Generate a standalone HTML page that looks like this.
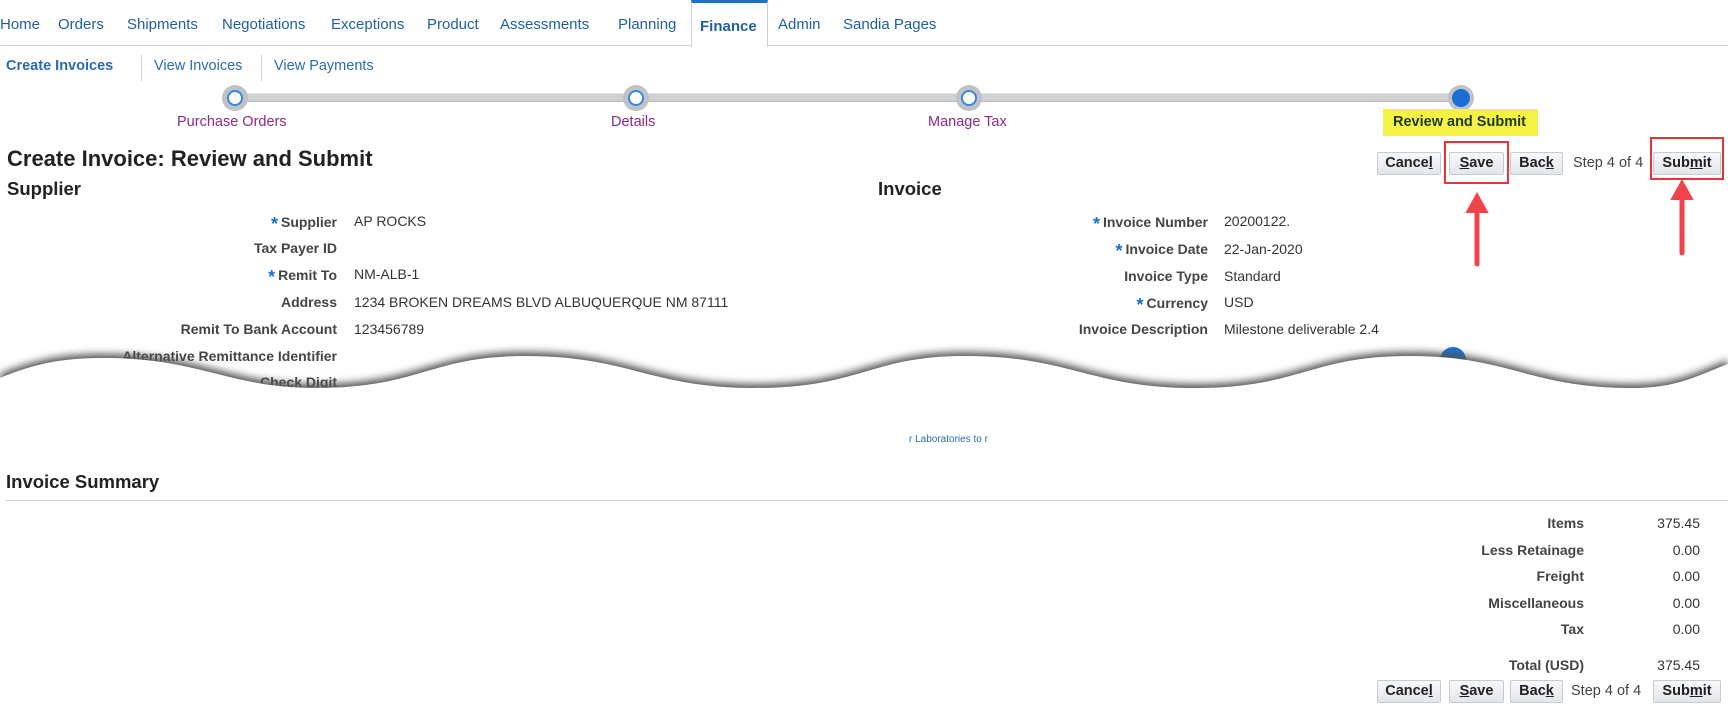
<!DOCTYPE html>
<html><head><meta charset="utf-8"><style>
*{margin:0;padding:0;box-sizing:border-box}
body{width:1728px;height:708px;background:#fff;font-family:"Liberation Sans",sans-serif;font-size:14px;color:#333;position:relative;overflow:hidden}
.a{position:absolute;white-space:nowrap}
.nav{color:#1f5f9f;font-size:15px;top:16px}
.sub{color:#2a6bb0;font-size:14.5px;top:58px}
.lbl{font-weight:bold;color:#444;text-align:right;width:340px}
.val{color:#333}
.star{color:#1a6fd0;font-size:18px;font-weight:bold;position:relative;top:3px;margin-right:3px}
.btn{position:absolute;height:23px;border:1px solid #c8ccd2;background:linear-gradient(#f7f8fa,#e3e6ea);border-radius:2px;font-weight:bold;color:#222;font-size:14.5px;text-align:center;line-height:21px}
.red{position:absolute;border:2px solid #e8333b}
.circ{position:absolute;width:26px;height:26px;border-radius:50%;background:#bfc2c6;top:85px}
.circ i{position:absolute;left:5px;top:5px;width:16px;height:16px;border-radius:50%;background:#fff;border:2px solid #3b87d8}
.step{color:#8a2a8a;font-size:14.5px;top:114px}
.h2{font-weight:bold;color:#222;font-size:18.5px}
.srow{font-weight:bold;color:#444;text-align:right;width:200px}
.snum{text-align:right;width:80px;color:#333}
</style></head><body>
<div class="a nav" style="left:0">Home</div>
<div class="a nav" style="left:58px">Orders</div>
<div class="a nav" style="left:127px">Shipments</div>
<div class="a nav" style="left:222px">Negotiations</div>
<div class="a nav" style="left:331px">Exceptions</div>
<div class="a nav" style="left:427px">Product</div>
<div class="a nav" style="left:500px">Assessments</div>
<div class="a nav" style="left:618px">Planning</div>
<div class="a" style="left:691px;top:0;width:77px;height:47px;border:1px solid #c8d0d8;border-top:3px solid #1a6fd0;border-bottom:none;background:#fff;z-index:2"></div>
<div class="a nav" style="left:700px;top:18px;font-weight:bold;z-index:3">Finance</div>
<div class="a nav" style="left:778px">Admin</div>
<div class="a nav" style="left:843px">Sandia Pages</div>
<div class="a" style="left:0;top:45px;width:1728px;height:1px;background:#c8d0d8"></div>

<div class="a sub" style="left:6px;font-weight:bold">Create Invoices</div>
<div class="a" style="left:141px;top:55px;width:1px;height:26px;background:#c8d0d8"></div>
<div class="a sub" style="left:154px">View Invoices</div>
<div class="a" style="left:261px;top:55px;width:1px;height:26px;background:#c8d0d8"></div>
<div class="a sub" style="left:274px">View Payments</div>

<div class="a" style="left:240px;top:93px;width:1222px;height:9px;background:#cfd1d3;border-top:1px solid #e2e3e4;border-bottom:1px solid #b8babc"></div>
<div class="circ" style="left:222px"><i></i></div>
<div class="circ" style="left:623px"><i></i></div>
<div class="circ" style="left:956px"><i></i></div>
<div class="circ" style="left:1448px"><i style="background:#1a6fd0;border-color:#1a6fd0;left:4px;top:4px;width:18px;height:18px"></i></div>
<div class="a step" style="left:177px">Purchase Orders</div>
<div class="a step" style="left:611px">Details</div>
<div class="a step" style="left:928px">Manage Tax</div>
<div class="a" style="left:1383px;top:109px;width:155px;height:27px;background:#f5f246"></div>
<div class="a" style="left:1393px;top:114px;font-weight:bold;color:#1d3a1d;font-size:14.5px">Review and Submit</div>

<div class="a" style="left:7px;top:146px;font-size:22px;font-weight:bold;color:#222">Create Invoice: Review and Submit</div>
<div class="btn" style="left:1377px;top:152px;width:64px">Cance<u>l</u></div>
<div class="btn" style="left:1449px;top:152px;width:55px"><u>S</u>ave</div>
<div class="btn" style="left:1510px;top:152px;width:53px">Bac<u>k</u></div>
<div class="a" style="left:1573px;top:155px;font-size:14.5px;color:#444">Step 4 of 4</div>
<div class="btn" style="left:1653px;top:152px;width:68px">Sub<u>m</u>it</div>
<div class="red" style="left:1444px;top:141px;width:65px;height:43px"></div>
<div class="red" style="left:1650px;top:137px;width:74px;height:43px"></div>
<svg class="a" style="left:0;top:0" width="1728" height="708">
<g fill="#f0444a" stroke="#f0444a" stroke-width="5" stroke-linecap="round">
<line x1="1477" y1="264" x2="1477" y2="205"/><polygon points="1467,212 1477,194 1487,212" stroke-width="2"/>
<line x1="1682" y1="253" x2="1682" y2="192"/><polygon points="1672,199 1682,181 1692,199" stroke-width="2"/>
</g></svg>

<div class="a h2" style="left:7px;top:178px">Supplier</div>
<div class="a h2" style="left:878px;top:178px">Invoice</div>

<div class="a lbl" style="left:-3px;top:211px"><span class="star">*</span>Supplier</div><div class="a val" style="left:354px;top:213px">AP ROCKS</div>
<div class="a lbl" style="left:-3px;top:240px">Tax Payer ID</div>
<div class="a lbl" style="left:-3px;top:264px"><span class="star">*</span>Remit To</div><div class="a val" style="left:354px;top:266px">NM-ALB-1</div>
<div class="a lbl" style="left:-3px;top:294px">Address</div><div class="a val" style="left:354px;top:294px">1234 BROKEN DREAMS BLVD ALBUQUERQUE NM 87111</div>
<div class="a lbl" style="left:-3px;top:321px">Remit To Bank Account</div><div class="a val" style="left:354px;top:321px">123456789</div>
<div class="a lbl" style="left:-3px;top:348px">Alternative Remittance Identifier</div>
<div class="a lbl" style="left:-3px;top:374px">Check Digit</div>

<div class="a lbl" style="left:868px;top:211px"><span class="star">*</span>Invoice Number</div><div class="a val" style="left:1224px;top:213px">20200122.</div>
<div class="a lbl" style="left:868px;top:238px"><span class="star">*</span>Invoice Date</div><div class="a val" style="left:1224px;top:241px">22-Jan-2020</div>
<div class="a lbl" style="left:868px;top:268px">Invoice Type</div><div class="a val" style="left:1224px;top:268px">Standard</div>
<div class="a lbl" style="left:868px;top:292px"><span class="star">*</span>Currency</div><div class="a val" style="left:1224px;top:294px">USD</div>
<div class="a lbl" style="left:868px;top:321px">Invoice Description</div><div class="a val" style="left:1224px;top:321px">Milestone deliverable 2.4</div>
<div class="a" style="left:1440px;top:347px;width:26px;height:26px;border-radius:50%;background:#1a6fd0"></div>

<svg class="a" style="left:0;top:0" width="1728" height="708">
<defs><filter id="b" x="-5%" y="-50%" width="110%" height="200%"><feGaussianBlur stdDeviation="4"/></filter></defs>
<path d="M0,372 C40,355 70,352 105,352 C200,352 230,382 315,382 C420,382 430,350 525,350 C630,350 650,382 755,382 C860,382 870,350 965,350 C1070,350 1090,382 1195,382 C1300,382 1310,350 1410,350 C1510,350 1530,382 1632,382 C1680,382 1700,368 1728,358 L1728,395 L0,395 Z" fill="#555" filter="url(#b)" transform="translate(0,2)"/>
<path d="M0,378 C40,361 70,358 105,358 C200,358 230,388 315,388 C420,388 430,356 525,356 C630,356 650,388 755,388 C860,388 870,356 965,356 C1070,356 1090,388 1195,388 C1300,388 1310,356 1410,356 C1510,356 1530,388 1632,388 C1680,388 1700,374 1728,364 L1728,708 L0,708 Z" fill="#fff"/>
</svg>
<div class="a" style="left:909px;top:434px;font-size:10px;color:#2a6bb0">r Laboratories to r</div>

<div class="a h2" style="left:6px;top:471px">Invoice Summary</div>
<div class="a" style="left:6px;top:500px;width:1722px;height:1px;background:#d0d4d8"></div>
<div class="a srow" style="left:1384px;top:515px">Items</div><div class="a snum" style="left:1620px;top:515px">375.45</div>
<div class="a srow" style="left:1384px;top:542px">Less Retainage</div><div class="a snum" style="left:1620px;top:542px">0.00</div>
<div class="a srow" style="left:1384px;top:568px">Freight</div><div class="a snum" style="left:1620px;top:568px">0.00</div>
<div class="a srow" style="left:1384px;top:595px">Miscellaneous</div><div class="a snum" style="left:1620px;top:595px">0.00</div>
<div class="a srow" style="left:1384px;top:621px">Tax</div><div class="a snum" style="left:1620px;top:621px">0.00</div>
<div class="a srow" style="left:1384px;top:657px">Total (USD)</div><div class="a snum" style="left:1620px;top:657px">375.45</div>
<div class="btn" style="left:1377px;top:680px;width:64px">Cance<u>l</u></div>
<div class="btn" style="left:1449px;top:680px;width:55px"><u>S</u>ave</div>
<div class="btn" style="left:1510px;top:680px;width:53px">Bac<u>k</u></div>
<div class="a" style="left:1571px;top:683px;font-size:14.5px;color:#444">Step 4 of 4</div>
<div class="btn" style="left:1653px;top:680px;width:68px">Sub<u>m</u>it</div>
</body></html>
